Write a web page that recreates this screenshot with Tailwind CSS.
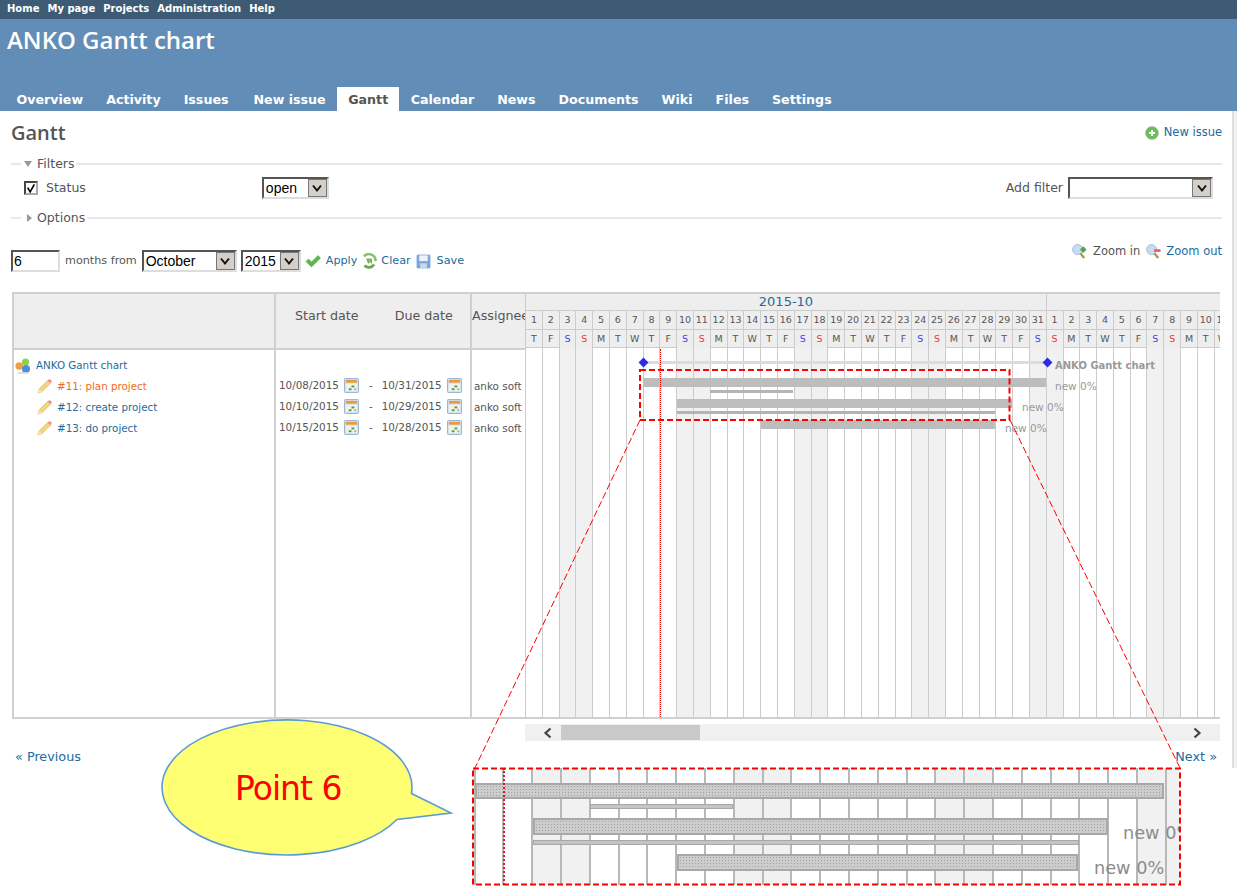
<!DOCTYPE html>
<html lang="en">
<head>
  <meta charset="UTF-8" />
  <title>Gantt - ANKO Gantt chart</title>
  <script src="https://cdn.jsdelivr.net/npm/@tailwindcss/browser@4"></script>
</head>
<body class="relative w-[1237px] h-[886px] overflow-hidden bg-white font-['DejaVu_Sans',sans-serif] text-[#555] text-[11.5px]">

  <!-- ─── icon symbols ─── -->
  <svg class="hidden">
    <symbol id="i-cal" viewBox="0 0 16 16">
      <rect x="0.5" y="0.5" width="15" height="15" rx="1" fill="#cfe0f2" stroke="#8fb2d8"/>
      <rect x="2" y="2" width="12" height="3" fill="#ee9a3c"/>
      <rect x="2" y="6" width="12" height="8" fill="#f4f2e6"/>
      <rect x="8" y="8" width="3" height="2" fill="#4aa04a"/>
      <rect x="5" y="11" width="3" height="2" fill="#4aa04a"/>
      <rect x="11" y="11" width="2" height="2" fill="#9ab"/>
    </symbol>
    <symbol id="i-pencil" viewBox="0 0 16 16">
      <path d="M1 15l1.2-4.4L11.4 1.6l3 3-9.2 9z" fill="#f3d77a" stroke="#c9a94e" stroke-width="0.6"/>
      <path d="M11.4 1.6l1.2-1.1c.5-.4 1.2-.4 1.6 0l1.2 1.2c.4.5.4 1.2 0 1.6l-1 1.2z" fill="#ee8f8f"/>
      <path d="M1 15l1.2-4.4 3 3z" fill="#f5e6c8"/>
    </symbol>
    <symbol id="i-project" viewBox="0 0 16 16">
      <circle cx="10.5" cy="4" r="3.6" fill="#8fd04e"/>
      <circle cx="4.2" cy="8" r="3.8" fill="#f0a040"/>
      <circle cx="11" cy="11" r="4" fill="#4a8fe0"/>
      <ellipse cx="8" cy="15" rx="6" ry="1" fill="#ddd"/>
    </symbol>
    <symbol id="i-check" viewBox="0 0 16 16">
      <path d="M1 8.5l2.5-2.5 3 3L13 2.5 15.5 5 6.5 14z" fill="#5cb84a" stroke="#4a9a3c" stroke-width="0.5"/>
    </symbol>
    <symbol id="i-clear" viewBox="0 0 16 16">
      <path d="M3 3.5A6.5 6.5 0 0 1 14.5 8" fill="none" stroke="#86c06a" stroke-width="2.6"/>
      <path d="M13 11.5A6 6 0 0 1 3.5 12.5" fill="none" stroke="#6aa84f" stroke-width="2.6"/>
      <path d="M5 5.5h6v5.5l-2-1.8-1.8 1.8z" fill="#7dba5f"/>
    </symbol>
    <symbol id="i-save" viewBox="0 0 16 16">
      <rect x="1" y="1" width="14" height="14" rx="1" fill="#7fa9dc" stroke="#6c96cc" stroke-width="0.6"/>
      <rect x="3.5" y="1.5" width="9" height="6" fill="#eef3fa"/>
      <rect x="4.5" y="10" width="7" height="5" fill="#c7d8ee"/>
    </symbol>
    <symbol id="i-zoom-in" viewBox="0 0 16 16">
      <circle cx="6" cy="6" r="5.4" fill="#c7dcf2" stroke="#a5bfdd"/>
      <path d="M9 10l4 5" stroke="#b98a4a" stroke-width="2.4"/>
      <path d="M9 6h6M12 3v6" stroke="#4f9e3f" stroke-width="2.6"/>
    </symbol>
    <symbol id="i-zoom-out" viewBox="0 0 16 16">
      <circle cx="6" cy="6" r="5.4" fill="#c7dcf2" stroke="#a5bfdd"/>
      <path d="M9 10l4 5" stroke="#b98a4a" stroke-width="2.4"/>
      <path d="M8.5 7h7" stroke="#ee5b5b" stroke-width="2.8"/>
    </symbol>
    <symbol id="i-add" viewBox="0 0 16 16">
      <circle cx="8" cy="8" r="7.4" fill="#6cbb5a" stroke="#8fcf80" stroke-width="0.8"/>
      <path d="M8 4.5v7M4.5 8h7" stroke="#fff" stroke-width="2.2"/>
    </symbol>
    <symbol id="i-down" viewBox="0 0 12 12">
      <path d="M2 3.5l4 5 4-5" fill="none" stroke="#111" stroke-width="2"/>
    </symbol>
  </svg>

  <!-- ─── top menu ─── -->
  <nav class="h-[19px] bg-[#3e5b76] flex items-center gap-[8px] pl-[7px] pb-[3px] text-white font-bold text-[10px]">
    <a>Home</a><a>My page</a><a>Projects</a><a>Administration</a><a>Help</a>
  </nav>

  <!-- ─── header + tabs ─── -->
  <header class="h-[92px] bg-[#628db6] flex flex-col justify-between text-white">
    <h1 class="pl-[7px] pt-[5px] text-[24px] leading-[32px] font-['Open_Sans',sans-serif] font-semibold">ANKO Gantt chart</h1>
    <div class="flex pl-[5px] h-[24px] font-bold text-[12.65px] leading-[26px]">
      <a class="px-[11.5px]">Overview</a>
      <a class="px-[11.5px]">Activity</a>
      <a class="px-[11.5px]">Issues</a>
      <a class="px-[11.5px] ml-[2px]">New issue</a>
      <a class="px-[11px] bg-white text-[#555]">Gantt</a>
      <a class="px-[11.5px]">Calendar</a>
      <a class="px-[11.5px]">News</a>
      <a class="px-[11.5px]">Documents</a>
      <a class="px-[11.5px]">Wiki</a>
      <a class="px-[11.5px]">Files</a>
      <a class="px-[11.5px]">Settings</a>
    </div>
  </header>

  <!-- ─── main area ─── -->
  <div class="flex h-[657px]">
    <main class="w-[1232px] pl-[11px] pr-[10px] flex flex-col">

      <!-- title row -->
      <div class="h-[44px] flex justify-between items-start pt-[9px]">
        <h2 class="text-[20px] leading-[26px] font-semibold font-['Open_Sans',sans-serif] text-[#555]">Gantt</h2>
        <a class="flex items-center gap-[5px] text-[#1c6b9c] mt-[4px]"><svg class="w-[14px] h-[14px]"><use href="#i-add"/></svg>New issue</a>
      </div>

      <!-- filters -->
      <div class="h-[18px] flex items-center text-[12.5px]">
        <span class="w-[10px] h-[2px] bg-[#e8e8e8]"></span>
        <span class="ml-[3px] w-0 h-0 border-x-[4px] border-x-transparent border-t-[6px] border-t-[#999]"></span>
        <span class="ml-[5px] mr-[2px]">Filters</span>
        <span class="flex-1 h-[2px] bg-[#e8e8e8]"></span>
      </div>
      <div class="h-[22px] mt-[4px] flex items-center text-[12.5px]">
        <span class="ml-[13px] w-[14px] h-[14px] border-2 border-t-[#444] border-l-[#444] border-r-[#aaa] border-b-[#aaa] flex items-center justify-center">
          <svg class="w-[11px] h-[11px]" viewBox="0 0 12 12"><path d="M2 5l3 5 5-9" fill="none" stroke="#000" stroke-width="2"/></svg>
        </span>
        <span class="ml-[8px]">Status</span>
        <div class="ml-[176px] w-[67px] h-[22px] flex border-2 border-t-[#555] border-l-[#555] border-r-[#ddd] border-b-[#ddd] bg-white font-['Liberation_Sans',sans-serif] text-[14px] text-black">
          <span class="flex-1 pl-[2px] leading-[19px]">open</span>
          <span class="w-[19px] bg-[#d4d0c8] border border-[#777] flex items-center justify-center"><svg class="w-[12px] h-[12px]"><use href="#i-down"/></svg></span>
        </div>
        <span class="ml-auto mr-[5px]">Add filter</span>
        <div class="mr-[9px] w-[145px] h-[22px] flex border-2 border-t-[#555] border-l-[#555] border-r-[#ddd] border-b-[#ddd] bg-white">
          <span class="flex-1"></span>
          <span class="w-[19px] bg-[#d4d0c8] border border-[#777] flex items-center justify-center"><svg class="w-[12px] h-[12px]"><use href="#i-down"/></svg></span>
        </div>
      </div>

      <!-- options -->
      <div class="h-[18px] mt-[10px] flex items-center text-[12.5px]">
        <span class="w-[10px] h-[2px] bg-[#e8e8e8]"></span>
        <span class="ml-[6px] w-0 h-0 border-y-[4px] border-y-transparent border-l-[5px] border-l-[#999]"></span>
        <span class="ml-[5px] mr-[2px]">Options</span>
        <span class="flex-1 h-[2px] bg-[#e8e8e8]"></span>
      </div>

      <!-- months row -->
      <div class="h-[22px] mt-[23px] flex items-center">
        <div class="w-[49px] h-[22px] border-2 border-t-[#555] border-l-[#555] border-r-[#ddd] border-b-[#ddd] pl-[1px] leading-[18px] font-['Liberation_Sans',sans-serif] text-[14px] text-black">6</div>
        <span class="ml-[5px] text-[11.2px] mt-px">months from</span>
        <div class="ml-[5px] w-[95px] h-[22px] flex border-2 border-t-[#555] border-l-[#555] border-r-[#ddd] border-b-[#ddd] font-['Liberation_Sans',sans-serif] text-[14px] text-black">
          <span class="flex-1 pl-[2px] leading-[19px]">October</span>
          <span class="w-[19px] bg-[#d4d0c8] border border-[#777] flex items-center justify-center"><svg class="w-[12px] h-[12px]"><use href="#i-down"/></svg></span>
        </div>
        <div class="ml-[4px] w-[60px] h-[22px] flex border-2 border-t-[#555] border-l-[#555] border-r-[#ddd] border-b-[#ddd] font-['Liberation_Sans',sans-serif] text-[14px] text-black">
          <span class="flex-1 pl-[2px] leading-[19px]">2015</span>
          <span class="w-[19px] bg-[#d4d0c8] border border-[#777] flex items-center justify-center"><svg class="w-[12px] h-[12px]"><use href="#i-down"/></svg></span>
        </div>
        <svg class="ml-[4px] w-[16px] h-[16px]"><use href="#i-check"/></svg>
        <a class="ml-[5px] text-[11.2px] mt-px text-[#1c6b9c]">Apply</a>
        <svg class="ml-[4px] w-[16px] h-[16px]"><use href="#i-clear"/></svg>
        <a class="ml-[4px] text-[11.2px] mt-px text-[#1c6b9c]">Clear</a>
        <svg class="ml-[5px] w-[15px] h-[15px]"><use href="#i-save"/></svg>
        <a class="ml-[6px] text-[11.2px] mt-px text-[#1c6b9c]">Save</a>
        <div class="ml-auto flex items-center -mt-[19px]">
          <svg class="w-[15px] h-[15px]"><use href="#i-zoom-in"/></svg>
          <span class="ml-[6px]">Zoom in</span>
          <svg class="ml-[6px] w-[15px] h-[15px]"><use href="#i-zoom-out"/></svg>
          <a class="ml-[5px] text-[#1c6b9c]">Zoom out</a>
        </div>
      </div>

      <!-- ─── gantt table ─── -->
      <div class="mt-[20px] ml-px w-[1208px] h-[427px] flex border-y-2 border-l-2 border-[#d0d0d0]">
        <!-- subject column -->
        <div class="w-[262px] shrink-0 border-r-2 border-[#d0d0d0] flex flex-col">
          <div class="h-[56px] bg-[#eee] border-b-2 border-[#d0d0d0]"></div>
          <div class="pt-[5px] text-[#1c6b9c] text-[10.3px]">
            <div class="h-[21px] flex items-center pl-[1px] gap-[5px]"><svg class="w-[16px] h-[16px]"><use href="#i-project"/></svg>ANKO Gantt chart</div>
            <div class="h-[21px] flex items-center pl-[23px] gap-[5px] text-[#f0691c]"><svg class="w-[15px] h-[15px]"><use href="#i-pencil"/></svg>#11: plan project</div>
            <div class="h-[21px] flex items-center pl-[23px] gap-[5px]"><svg class="w-[15px] h-[15px]"><use href="#i-pencil"/></svg>#12: create project</div>
            <div class="h-[21px] flex items-center pl-[23px] gap-[5px]"><svg class="w-[15px] h-[15px]"><use href="#i-pencil"/></svg>#13: do project</div>
          </div>
        </div>
        <!-- date columns -->
        <div class="w-[196px] shrink-0 border-r-2 border-[#d0d0d0] flex flex-col">
          <div class="h-[56px] bg-[#eee] border-b-2 border-[#d0d0d0] flex pb-[10px] items-center text-[12.7px] text-[#555]">
            <span class="ml-[19px]">Start date</span><span class="ml-[36px]">Due date</span>
          </div>
          <div class="pt-[25px] text-[10.4px]">
            <div class="h-[21px] flex items-center pl-[3px]">10/08/2015<svg class="ml-[5px] w-[15px] h-[15px]"><use href="#i-cal"/></svg><span class="ml-[10px]">-</span><span class="ml-[9px]">10/31/2015</span><svg class="ml-[5px] w-[15px] h-[15px]"><use href="#i-cal"/></svg></div>
            <div class="h-[21px] flex items-center pl-[3px]">10/10/2015<svg class="ml-[5px] w-[15px] h-[15px]"><use href="#i-cal"/></svg><span class="ml-[10px]">-</span><span class="ml-[9px]">10/29/2015</span><svg class="ml-[5px] w-[15px] h-[15px]"><use href="#i-cal"/></svg></div>
            <div class="h-[21px] flex items-center pl-[3px]">10/15/2015<svg class="ml-[5px] w-[15px] h-[15px]"><use href="#i-cal"/></svg><span class="ml-[10px]">-</span><span class="ml-[9px]">10/28/2015</span><svg class="ml-[5px] w-[15px] h-[15px]"><use href="#i-cal"/></svg></div>
          </div>
        </div>
        <!-- assignee column -->
        <div class="w-[53px] shrink-0 flex flex-col overflow-hidden">
          <div class="h-[56px] bg-[#eee] border-b-2 border-[#d0d0d0] flex pb-[10px] items-center text-[12.7px] whitespace-nowrap">Assignee</div>
          <div class="pt-[25px] pl-[2px] text-[10.4px] whitespace-nowrap">
            <div class="h-[21px] leading-[22px]">anko soft</div>
            <div class="h-[21px] leading-[22px]">anko soft</div>
            <div class="h-[21px] leading-[22px]">anko soft</div>
          </div>
        </div>
        <!-- chart -->
        <div class="relative w-[695px] overflow-hidden flex flex-col">
          <div class="h-[17px] flex bg-[#eee] border-b border-l border-[#ccc] text-[13px] leading-[15px] text-[#1c6b9c]">
            <span class="w-[521px] shrink-0 text-center border-r border-[#ccc]">2015-10</span>
          </div>
          <div id="day-columns" class="flex-1 flex border-l border-[#ccc]"></div>

          <!-- bars -->
          <div class="absolute left-[118px] top-[67px] w-[404px] h-[3px] bg-[#dcdcdc]"></div>
          <div class="absolute left-[115px] top-[65px] w-[7px] h-[7px] rotate-45 bg-[#2b2bee]"></div>
          <div class="absolute left-[519px] top-[65px] w-[7px] h-[7px] rotate-45 bg-[#2b2bee]"></div>
          <div class="absolute left-[118px] top-[84px] w-[403px] h-[9px] bg-[#bdbdbd]"></div>
          <div class="absolute left-[185px] top-[96px] w-[83px] h-[3px] bg-[#b4b4b4]"></div>
          <div class="absolute left-[152px] top-[105px] w-[335px] h-[9px] bg-[#bdbdbd]"></div>
          <div class="absolute left-[152px] top-[117px] w-[318px] h-[3px] bg-[#b4b4b4]"></div>
          <div class="absolute left-[236px] top-[126px] w-[234px] h-[9px] bg-[#bdbdbd]"></div>
          <div class="absolute left-[135px] top-[55px] h-[370px] border-l border-dotted border-[#f00]"></div>
          <span class="absolute left-[530px] top-[64px] text-[10px] font-bold text-[#999] whitespace-nowrap">ANKO Gantt chart</span>
          <span class="absolute left-[530px] top-[85px] text-[10.5px] text-[#999] whitespace-nowrap">new 0%</span>
          <span class="absolute left-[497px] top-[106px] text-[10.5px] text-[#999] whitespace-nowrap">new 0%</span>
          <span class="absolute left-[480px] top-[127px] text-[10.5px] text-[#999] whitespace-nowrap">new 0%</span>
        </div>
      </div>

      <!-- scrollbar -->
      <div class="mt-[5px] ml-[514px] w-[695px] h-[17px] bg-[#f0f0f0] flex items-center">
        <svg class="ml-[17px] w-[12px] h-[12px]" viewBox="0 0 12 12"><path d="M8.5 1.5L3.5 6l5 4.5" fill="none" stroke="#444" stroke-width="2.2"/></svg>
        <span class="ml-[7px] w-[139px] h-[15px] bg-[#c9c9c9]"></span>
        <svg class="ml-auto mr-[17px] w-[12px] h-[12px]" viewBox="0 0 12 12"><path d="M3.5 1.5L8.5 6l-5 4.5" fill="none" stroke="#444" stroke-width="2.2"/></svg>
      </div>

      <!-- previous / next -->
      <div class="mt-[6px] flex justify-between text-[#1c6b9c] text-[12.8px] pl-[4px] pr-[5px]">
        <a>« Previous</a><a>Next »</a>
      </div>
    </main>
    <!-- right edge strip -->
    <div class="w-[5px] border-l-2 border-[#dedede] bg-[#f1f1f1]"></div>
  </div>

  <!-- ─── zoomed inset ─── -->
  <div class="absolute left-[472px] top-[768px] w-[708px] h-[117px] bg-white overflow-hidden">
    <div id="inset-columns" class="flex h-full pl-[1.6px]"></div>
    <div class="absolute left-[3px] top-[15px] w-[689px] h-[16px] border-2 border-[#a8a8a8] bg-[radial-gradient(circle,#a0a0a0_1px,#cdcdcd_1px)] bg-size-[3px_3px]"></div>
    <div class="absolute left-[118px] top-[36px] w-[143px] h-[5px] border border-[#a8a8a8] bg-[#c4c4c4]"></div>
    <div class="absolute left-[61px] top-[50px] w-[575px] h-[17px] border-2 border-[#a8a8a8] bg-[radial-gradient(circle,#a0a0a0_1px,#cdcdcd_1px)] bg-size-[3px_3px]"></div>
    <div class="absolute left-[61px] top-[72px] w-[546px] h-[5px] border border-[#a8a8a8] bg-[#c4c4c4]"></div>
    <div class="absolute left-[205px] top-[86px] w-[401px] h-[17px] border-2 border-[#a8a8a8] bg-[radial-gradient(circle,#a0a0a0_1px,#cdcdcd_1px)] bg-size-[3px_3px]"></div>
    <div class="absolute left-[31px] top-0 h-full border-l-2 border-dotted border-[#e8141c]"></div>
    <span class="absolute left-[651px] top-[52px] text-[17.7px] text-[#8c8c8c] whitespace-nowrap">new 0%</span>
    <span class="absolute left-[622px] top-[87px] text-[17.7px] text-[#8c8c8c] whitespace-nowrap">new 0%</span>
  </div>

  <!-- ─── annotation overlay: dashed frames, guide lines, callout ─── -->
  <svg class="absolute left-0 top-0 w-[1237px] h-[886px] pointer-events-none" viewBox="0 0 1237 886">
    <rect x="640" y="370" width="369.5" height="50" fill="none" stroke="#f00" stroke-width="2" stroke-dasharray="6 3"/>
    <rect x="473" y="768.5" width="707" height="116" fill="none" stroke="#f00" stroke-width="2" stroke-dasharray="6 3"/>
    <path d="M640 420L475 768M1010 420L1180 768" fill="none" stroke="#f00" stroke-width="1" stroke-dasharray="7 3"/>
    <path d="M411.5 793.5A125 67.5 0 1 0 397 819.5L451 813Z" fill="#ffff73" stroke="#5b9bd5" stroke-width="1.6"/>
  </svg>
  <span class="absolute left-[235px] top-[769px] text-[33px] leading-[40px] tracking-[-1px] text-[#f00] whitespace-nowrap">Point 6</span>

  <script>
    // day columns of the chart and of the zoomed inset
    const letters = ['T', 'F', 'S', 'S', 'M', 'T', 'W'];
    let html = '';
    for (let i = 0; i < 42; i++) {
      const day = i < 31 ? i + 1 : i - 30;
      const wd = i % 7;
      const weekend = wd === 2 || wd === 3;
      const color = wd === 2 ? 'text-[#3a3aff]' : wd === 3 ? 'text-[#ff3030]' : 'text-[#555]';
      html += '<div class="w-[16.8px] shrink-0 flex flex-col border-r border-[#ccc] text-center text-[9.5px] ' + (weekend ? 'bg-[#f1f1f1]' : 'bg-white') + '">'
        + '<div class="h-[19px] bg-[#eee] border-b border-[#ccc] leading-[17px] text-[#555]">' + day + '</div>'
        + '<div class="h-[18px] bg-[#eee] leading-[17px] ' + (weekend ? '' : 'border-b border-[#ccc] ') + color + '">' + letters[wd] + '</div>'
        + '</div>';
    }
    document.getElementById('day-columns').innerHTML = html;

    let inset = '';
    for (let i = 0; i < 25; i++) {
      const weekend = i % 7 === 2 || i % 7 === 3;
      inset += '<div class="w-[28.8px] shrink-0 border-l-2 border-[#b8b8b8] ' + (weekend ? 'bg-[#f1f1f1]' : 'bg-white') + '"></div>';
    }
    document.getElementById('inset-columns').innerHTML = inset;
  </script>
</body>
</html>
